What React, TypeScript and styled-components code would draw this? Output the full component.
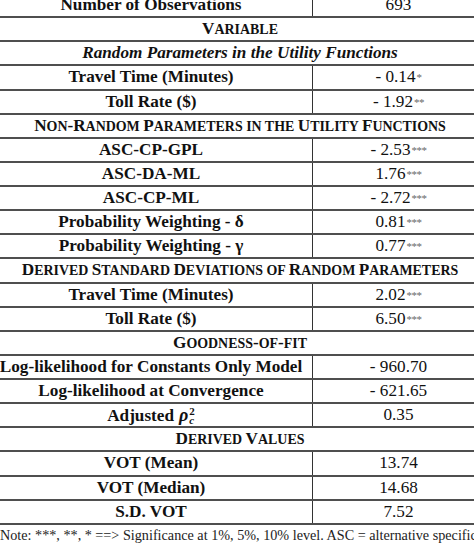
import React from "react"
import styled, { createGlobalStyle } from "styled-components"

const GlobalStyle = createGlobalStyle`
  html, body {
    margin: 0;
    padding: 0;
    background: #fff;
    overflow: hidden;
  }
`

const Table = styled.div`
  margin: -6px 0 0 -10px;
  width: 500px;
  font-family: "Liberation Serif", "Times New Roman", serif;
  font-size: 17.2px;
  color: #111;
`

const Row = styled.div`
  display: grid;
  grid-template-columns: 323px 1fr;
  height: 24.14px;
  box-sizing: border-box;
  border-bottom: 2px solid #4f4f4f;
`

const Label = styled.div`
  display: flex;
  align-items: center;
  justify-content: center;
  font-weight: bold;
  white-space: nowrap;
  border-right: 1.5px solid #333;
`

const Value = styled.div`
  display: flex;
  align-items: center;
  justify-content: center;
  padding-right: 6px;
  white-space: nowrap;
`

const Section = styled.div<{ $italic?: boolean }>`
  display: flex;
  align-items: center;
  justify-content: center;
  height: 24.14px;
  box-sizing: border-box;
  border-bottom: 2px solid #4f4f4f;
  font-weight: bold;
  white-space: nowrap;
  font-style: ${p => (p.$italic ? "italic" : "normal")};
`

const Small = styled.span`
  font-size: 0.81em;
`

const Stars = styled.sup`
  font-size: 11px;
  color: #666;
  line-height: 0;
  vertical-align: 6px;
  margin-left: 1px;
  letter-spacing: -0.5px;
`

const Rho = styled.span`
  font-style: italic;
  font-size: 1.05em;
  margin-left: 5px;
`

const Script = styled.span`
  display: inline-flex;
  flex-direction: column;
  font-size: 11px;
  line-height: 9px;
  margin-left: 1px;
  vertical-align: 6px;
`

const Sub = styled.span`
  font-style: italic;
`

const Note = styled.div`
  padding: 2px 0 0 10px;
  font-size: 14.2px;
  white-space: nowrap;
  color: #222;
`

// small caps drawn by hand: capitals stay full size, the rest is shrunk
function SmallCaps({ text }: { text: string }) {
  const parts: React.ReactNode[] = []
  let buf = ""
  let lower = false
  const flush = (k: number) => {
    if (!buf) return
    parts.push(lower ? <Small key={k}>{buf.toUpperCase()}</Small> : buf)
    buf = ""
  }
  Array.from(text).forEach((ch, i) => {
    const isLower = ch !== ch.toUpperCase()
    if (isLower !== lower && ch !== " ") {
      flush(i)
      lower = isLower
    }
    buf += ch
  })
  flush(text.length)
  return <span>{parts}</span>
}

type Item =
  | { kind: "section"; text: string; italic?: boolean }
  | { kind: "row"; label: React.ReactNode; value: string; stars?: string }

const items: Item[] = [
  { kind: "row", label: "Number of Observations", value: "693" },
  { kind: "section", text: "Variable" },
  { kind: "section", text: "Random Parameters in the Utility Functions", italic: true },
  { kind: "row", label: "Travel Time (Minutes)", value: "- 0.14", stars: "*" },
  { kind: "row", label: "Toll Rate ($)", value: "- 1.92", stars: "**" },
  { kind: "section", text: "Non-Random Parameters in the Utility Functions" },
  { kind: "row", label: "ASC-CP-GPL", value: "- 2.53", stars: "***" },
  { kind: "row", label: "ASC-DA-ML", value: "1.76", stars: "***" },
  { kind: "row", label: "ASC-CP-ML", value: "- 2.72", stars: "***" },
  { kind: "row", label: "Probability Weighting - δ", value: "0.81", stars: "***" },
  { kind: "row", label: "Probability Weighting - γ", value: "0.77", stars: "***" },
  { kind: "section", text: "Derived Standard Deviations of Random Parameters" },
  { kind: "row", label: "Travel Time (Minutes)", value: "2.02", stars: "***" },
  { kind: "row", label: "Toll Rate ($)", value: "6.50", stars: "***" },
  { kind: "section", text: "Goodness-of-fit" },
  { kind: "row", label: "Log-likelihood for Constants Only Model", value: "- 960.70" },
  { kind: "row", label: "Log-likelihood at Convergence", value: "- 621.65" },
  {
    kind: "row",
    label: (
      <span>
        Adjusted
        <Rho>ρ</Rho>
        <Script>
          <span>2</span>
          <Sub>c</Sub>
        </Script>
      </span>
    ),
    value: "0.35",
  },
  { kind: "section", text: "Derived Values" },
  { kind: "row", label: "VOT (Mean)", value: "13.74" },
  { kind: "row", label: "VOT (Median)", value: "14.68" },
  { kind: "row", label: "S.D. VOT", value: "7.52" },
]

export default function App() {
  return (
    <>
      <GlobalStyle />
      <Table>
        {items.map((it, i) =>
          it.kind === "section" ? (
            <Section key={i} $italic={it.italic}>
              {it.italic ? it.text : <SmallCaps text={it.text} />}
            </Section>
          ) : (
            <Row key={i}>
              <Label>{it.label}</Label>
              <Value>
                {it.value}
                {it.stars && <Stars>{it.stars}</Stars>}
              </Value>
            </Row>
          )
        )}
        <Note>
          Note: ***, **, * ==&gt; Significance at 1%, 5%, 10% level. ASC = alternative specific constant
        </Note>
      </Table>
    </>
  )
}
